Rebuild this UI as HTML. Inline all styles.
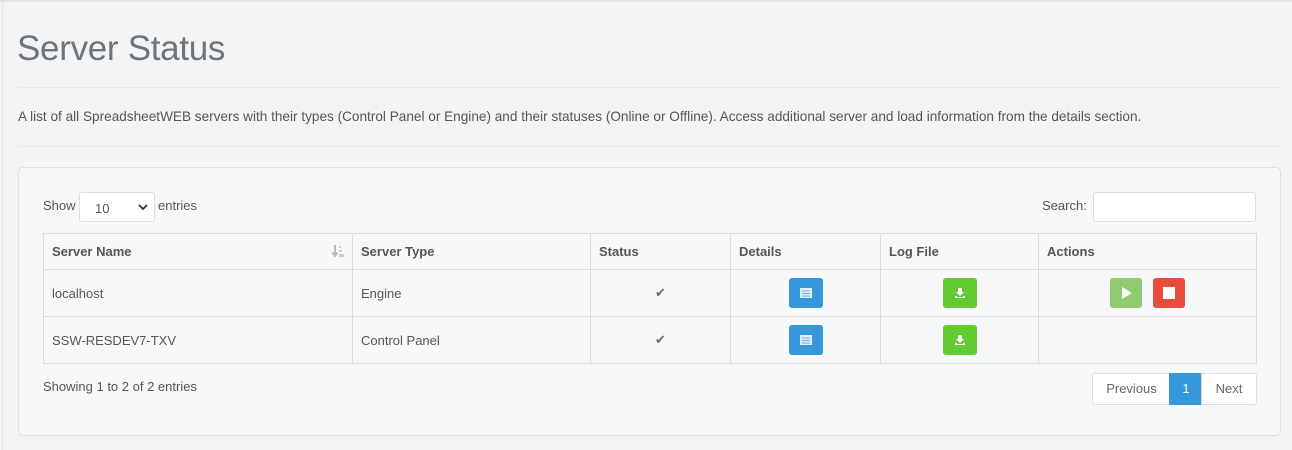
<!DOCTYPE html>
<html><head><style>
body{margin:0;width:1292px;height:450px;background:#f3f4f6;font-family:"Liberation Sans",sans-serif;color:#555;position:relative;overflow:hidden}
.a{position:absolute}
.top{left:0;top:0;width:1292px;height:3px;background:linear-gradient(#ddd,#f3f4f6)}
.lb{left:2px;top:0;width:1px;height:450px;background:#e3e3e3}
h1{position:absolute;left:17px;top:29px;margin:0;font-weight:normal;font-size:35px;color:#6f747b;letter-spacing:-0.3px}
.hr{left:18px;width:1263px;height:1px;background:#e6e7e9}
.desc{left:18px;top:109px;font-size:13.6px;color:#555}
.card{left:18px;top:167px;width:1261px;height:267px;border:1px solid #e0e0e0;border-radius:5px;background:#f7f8f9}
table{position:absolute;left:43px;top:233px;border-collapse:collapse;font-size:13px;color:#555}
td,th{border:1px solid #dcdcdc;padding:0 8px;text-align:left}
th{height:35px;font-weight:bold;color:#555}
td{height:46px}
.c{text-align:center}
.btn{display:inline-block;width:34px;height:30px;border-radius:3px;vertical-align:middle;position:relative}
.sel{left:79px;top:192px;width:74px;height:28px;border:1px solid #ddd;border-radius:3px;background:#fff;font-size:13px}
.inp{left:1093px;top:192px;width:161px;height:28px;border:1px solid #ddd;border-radius:3px;background:#fff}
.pg{top:373px;height:30px;border:1px solid #ddd;background:#fff;font-size:13px;line-height:30px;text-align:center;color:#666}
</style></head><body>
<div class="a top"></div><div class="a lb"></div>
<h1>Server Status</h1>
<div class="a hr" style="top:87px"></div>
<div class="a desc">A list of all SpreadsheetWEB servers with their types (Control Panel or Engine) and their statuses (Online or Offline). Access additional server and load information from the details section.</div>
<div class="a hr" style="top:146px"></div>
<div class="a card"></div>
<div class="a" style="left:43px;top:198px;font-size:13px">Show</div>
<div class="a sel"><span style="position:absolute;left:15px;top:8px">10</span><svg style="position:absolute;left:58px;top:10px" width="10" height="8" viewBox="0 0 10 8"><path d="M1 2l4 4 4-4" stroke="#333" stroke-width="1.8" fill="none"/></svg></div>
<div class="a" style="left:158px;top:198px;font-size:13px">entries</div>
<div class="a" style="left:1042px;top:198px;font-size:13px">Search:</div>
<div class="a inp"></div>
<table>
<tr><th style="width:292px;position:relative">Server Name<svg style="position:absolute;right:8px;top:11px" width="12" height="13"><path d="M3 0v10M0.5 7.5L3 11l2.5-3.5" stroke="#bbb" stroke-width="2" fill="none"/><path d="M7 1h2v2H7zM7 5h3v2H7zM7 9h5v3H7z" fill="#ccc"/></svg></th><th style="width:221px">Server Type</th><th style="width:123px">Status</th><th style="width:133px">Details</th><th style="width:141px">Log File</th><th style="width:201px">Actions</th></tr>
<tr><td>localhost</td><td>Engine</td><td class="c" style="color:#666">✔</td>
<td class="c"><span class="btn" style="background:#3498db"><svg class="a" style="left:11px;top:10px" width="12" height="10"><rect width="12" height="10" fill="#fff" opacity=".85"/><path d="M2 3h8M2 5.5h8M2 8h8" stroke="#3498db" stroke-width=".8"/></svg></span></td>
<td class="c"><span class="btn" style="background:#62cb31"><svg class="a" style="left:11px;top:9px" width="12" height="12"><path d="M4 1h4v4h2l-4 4-4-4h2zM1 9h2v1h6v-1h2v2H1z" fill="#fff"/></svg></span></td>
<td class="c"><span class="btn" style="background:#90cb6f;width:32px"><svg class="a" style="left:11px;top:9px" width="12" height="12"><path d="M1 0l10 6-10 6z" fill="#fff"/></svg></span>&nbsp;&nbsp;&nbsp;<span class="btn" style="background:#e74c3c;width:32px"><span class="a" style="left:10px;top:9px;width:12px;height:12px;background:#fff"></span></span></td></tr>
<tr><td>SSW-RESDEV7-TXV</td><td>Control Panel</td><td class="c" style="color:#666">✔</td>
<td class="c"><span class="btn" style="background:#3498db"><svg class="a" style="left:11px;top:10px" width="12" height="10"><rect width="12" height="10" fill="#fff" opacity=".85"/><path d="M2 3h8M2 5.5h8M2 8h8" stroke="#3498db" stroke-width=".8"/></svg></span></td>
<td class="c"><span class="btn" style="background:#62cb31"><svg class="a" style="left:11px;top:9px" width="12" height="12"><path d="M4 1h4v4h2l-4 4-4-4h2zM1 9h2v1h6v-1h2v2H1z" fill="#fff"/></svg></span></td>
<td></td></tr>
</table>
<div class="a" style="left:43px;top:379px;font-size:13px">Showing 1 to 2 of 2 entries</div>
<div class="a pg" style="left:1092px;width:77px;border-radius:3px 0 0 3px">Previous</div>
<div class="a pg" style="left:1169px;width:32px;background:#3498db;border-color:#3498db;color:#fff">1</div>
<div class="a pg" style="left:1201px;width:54px;border-radius:0 3px 3px 0">Next</div>
</body></html>
